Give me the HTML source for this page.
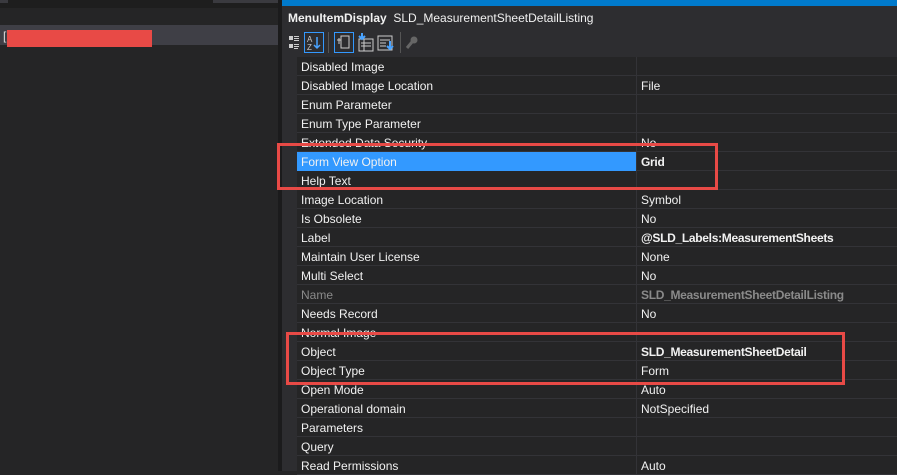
<!DOCTYPE html><html><head><style>
body{margin:0;width:897px;height:471px;overflow:hidden;background:#252526;font-family:"Liberation Sans",sans-serif;font-size:12px;color:#f1f1f1;position:relative}
.a{position:absolute}
.row{position:absolute;left:297px;width:600px;height:19px;border-bottom:1px solid #333337;box-sizing:border-box}
.n{position:absolute;left:4px;top:3px}
.v{position:absolute;left:344px;top:3px}
.c{position:absolute;left:339px;top:0;width:1px;height:19px;background:#333337}
.b{font-weight:bold;letter-spacing:-0.3px}
.g{color:#8a8a8a}
</style></head><body>
<div class="a" style="left:0;top:0;width:278px;height:8px;background:#1e1e1e"></div>
<div class="a" style="left:0;top:0;width:278px;height:3px;background:#3a3a3f"></div>
<div class="a" style="left:8px;top:0;width:205px;height:3px;background:#1e1e1e"></div>
<div class="a" style="left:0;top:25px;width:278px;height:20px;background:#3f3f46"></div>
<div class="a" style="left:3px;top:29px;color:#ddd">[</div>
<div class="a" style="left:7px;top:30px;width:145px;height:17px;background:#e84a46"></div>
<div class="a" style="left:278px;top:0;width:4px;height:471px;background:#1b1b1c"></div>
<div class="a" style="left:282px;top:0;width:615px;height:6px;background:#007acc"></div>
<div class="a" style="left:282px;top:6px;width:615px;height:51px;background:#2d2d30"></div>
<div class="a" style="left:288px;top:11px"><b>MenuItemDisplay</b>&nbsp; SLD_MeasurementSheetDetailListing</div>
<svg class="a" style="left:286px;top:32px" width="150" height="22">
<g fill="#ccc"><rect x="3" y="4" width="4" height="4"/><rect x="3" y="12" width="4" height="4"/>
<rect x="8" y="4" width="5" height="1"/><rect x="8" y="6" width="5" height="1"/><rect x="8" y="8" width="5" height="1"/><rect x="8" y="12" width="5" height="1"/><rect x="8" y="14" width="5" height="1"/><rect x="8" y="16" width="4" height="1"/></g>
<rect x="18.5" y="0.5" width="19" height="20" fill="none" stroke="#3399ff"/>
<text x="21" y="10" fill="#ccc" font-size="8" font-family="Liberation Sans">A</text>
<text x="21" y="18" fill="#ccc" font-size="8" font-family="Liberation Sans">Z</text>
<path d="M31 5V16M28 13l3 3 3-3" stroke="#4aa3ff" stroke-width="1.5" fill="none"/>
<rect x="42" y="0" width="1" height="21" fill="#555"/>
<rect x="48.5" y="0.5" width="19" height="20" fill="none" stroke="#3399ff"/>
<path d="M55 4h8v12h-8z" fill="none" stroke="#ccc"/><path d="M53 6v6M51 8h4" stroke="#ccc" fill="none"/>
<rect x="73" y="7" width="14" height="12" fill="none" stroke="#ccc"/><path d="M75 11h10M75 14h10M78 7v12" stroke="#ccc"/>
<path d="M76 1v6M73 4l3 3 3-3" stroke="#4aa3ff" stroke-width="2" fill="none"/>
<rect x="92" y="4" width="14" height="14" fill="none" stroke="#ccc"/><path d="M94 8h10M94 11h6M94 14h6" stroke="#ccc"/>
<path d="M104 9v8M101 14l3 3 3-3" stroke="#4aa3ff" stroke-width="2" fill="none"/>
<rect x="114" y="0" width="1" height="21" fill="#555"/>
<circle cx="128" cy="8" r="3.5" fill="#666"/><path d="M126 10l-5 6" stroke="#666" stroke-width="3"/>
</svg>
<div class="a" style="left:282px;top:57px;width:15px;height:414px;background:#2d2d30"></div>
<div id="g"></div>
<script>
var R=[["Disabled Image",""],["Disabled Image Location","File"],["Enum Parameter",""],["Enum Type Parameter",""],["Extended Data Security","No"],["Form View Option","Grid","b"],["Help Text",""],["Image Location","Symbol"],["Is Obsolete","No"],["Label","@SLD_Labels:MeasurementSheets","b"],["Maintain User License","None"],["Multi Select","No"],["Name","SLD_MeasurementSheetDetailListing","g"],["Needs Record","No"],["Normal Image",""],["Object","SLD_MeasurementSheetDetail","b"],["Object Type","Form"],["Open Mode","Auto"],["Operational domain","NotSpecified"],["Parameters",""],["Query",""],["Read Permissions","Auto"]];
var h="";R.forEach(function(r,i){var t=57+i*19;var sel=i==5;
h+='<div class="row" style="top:'+t+'px">'+(sel?'<div class="a" style="left:0;top:0;width:340px;height:19px;background:#3399ff"></div>':'')+'<div class="n'+(r[2]=="g"?" g":"")+'">'+r[0]+'</div><div class="c"></div><div class="v '+(r[2]=="g"?"g b":(r[2]||""))+'">'+r[1]+'</div></div>';});
document.getElementById("g").innerHTML=h;
</script>
<div class="a" style="left:277px;top:143px;width:441px;height:47px;border:3px solid #e84a46;box-sizing:border-box"></div>
<div class="a" style="left:286px;top:332px;width:559px;height:53px;border:3px solid #e84a46;box-sizing:border-box"></div>
</body></html>
